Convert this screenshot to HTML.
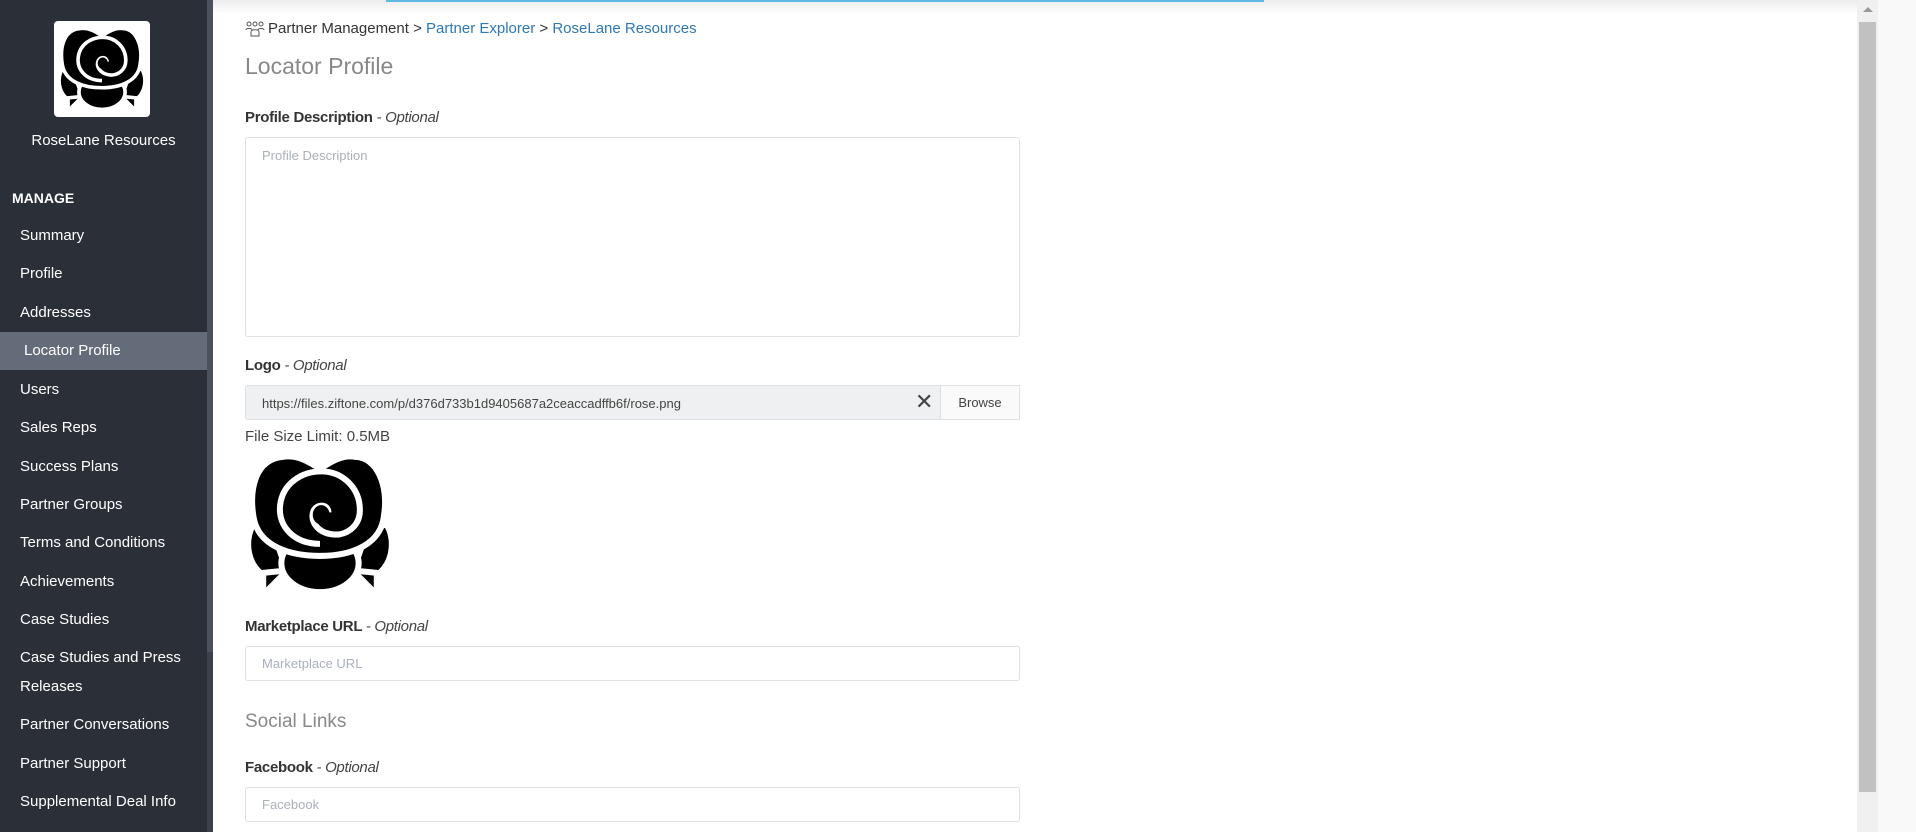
<!DOCTYPE html>
<html><head><meta charset="utf-8"><style>
*{box-sizing:border-box;margin:0;padding:0}
body{width:1916px;height:832px;overflow:hidden;background:#fff;font-family:"Liberation Sans",sans-serif;position:relative;color:#333}
.abs{position:absolute;white-space:nowrap}
#sb{position:absolute;left:0;top:0;width:207px;height:832px;background:#2b2f38}
#sbs{position:absolute;left:207px;top:0;width:6px;height:832px;background:#3b4049}
#sbt{position:absolute;left:207px;top:0;width:6px;height:652px;background:#4b515b}
.nav{position:absolute;left:20px;color:#fff;font-size:15px;line-height:20px}
.lab{position:absolute;left:245px;font-size:15px;line-height:20px;color:#333;font-weight:bold;letter-spacing:-0.3px}
.lab i{font-weight:normal;color:#444}
.inp{position:absolute;left:245px;width:775px;border:1px solid #dde1e5;border-radius:3px;background:#fff;color:#aab0ba;font-size:13px;padding-left:16px}
</style></head><body>
<svg width="0" height="0" style="position:absolute"><defs>
<g id="rose">
<g fill="#000" stroke="#fff" stroke-width="5">
<path d="M6 60 C-2 72 0 96 18 104 L40 104 C30 92 26 80 24 64 Z"/>
<path d="M116 60 C124 72 122 96 104 104 L82 104 C92 92 96 80 98 64 Z"/>
<path d="M14 118 L14 100 L34 98 Z"/><path d="M108 118 L108 100 L88 98 Z"/>
<ellipse cx="61" cy="92" rx="32" ry="24"/>
<path d="M30 4 C8 6 2 30 6 54 C10 78 36 86 61 86 C88 86 112 76 114 52 C118 28 108 4 90 4 C80 2 70 8 61 14 C52 8 42 2 30 4 Z"/>
</g>
<path d="M61 76 C40 76 26 62 28 44 C30 26 46 16 62 16 C80 16 94 30 94 48 C94 62 82 70 70 68 C58 66 52 56 56 48 C60 42 68 44 68 50" fill="none" stroke="#fff" stroke-width="5"/>
<ellipse cx="62" cy="52" rx="7" ry="8" fill="#000"/>
</g></defs></svg>
<div id="sb"></div><div id="sbs"></div><div id="sbt"></div>
<div class="abs" style="left:54px;top:21px;width:96px;height:96px;background:#fff;border-radius:4px"></div>
<svg class="abs" style="left:58px;top:25px" width="88" height="88" viewBox="0 0 122 120"><use href="#rose"/></svg>
<div class="abs" style="left:0;width:207px;top:132px;text-align:center;color:#fff;font-size:15px">RoseLane Resources</div>
<div class="abs" style="left:12px;top:190px;color:#fff;font-size:14px;font-weight:bold">MANAGE</div>
<div class="abs" style="left:0;top:332px;width:207px;height:38px;background:#646c7a"></div>
<div class="nav" style="top:226px">Summary</div>
<div class="nav" style="top:264px">Profile</div>
<div class="nav" style="top:303px">Addresses</div>
<div class="nav" style="top:341px;left:24px">Locator Profile</div>
<div class="nav" style="top:380px">Users</div>
<div class="nav" style="top:418px">Sales Reps</div>
<div class="nav" style="top:457px">Success Plans</div>
<div class="nav" style="top:495px">Partner Groups</div>
<div class="nav" style="top:533px">Terms and Conditions</div>
<div class="nav" style="top:572px">Achievements</div>
<div class="nav" style="top:610px">Case Studies</div>
<div class="nav" style="top:648px">Case Studies and Press</div>
<div class="nav" style="top:677px">Releases</div>
<div class="nav" style="top:715px">Partner Conversations</div>
<div class="nav" style="top:754px">Partner Support</div>
<div class="nav" style="top:792px">Supplemental Deal Info</div>

<div class="abs" style="left:213px;top:0;width:1644px;height:14px;background:linear-gradient(#ececec,#fff)"></div>
<div class="abs" style="left:386px;top:0;width:878px;height:2px;background:#5fb8e6"></div>
<svg class="abs" style="left:245px;top:21px" width="20" height="16" viewBox="0 0 20 16" fill="none" stroke="#555" stroke-width="1"><circle cx="4" cy="3" r="2"/><circle cx="10" cy="3" r="2"/><circle cx="16" cy="3" r="2"/><path d="M1 9c0-2 6-2 6 0M13 9c0-2 6-2 6 0M6 15v-4c0-3 8-3 8 0v4z"/></svg>
<div class="abs" style="left:268px;top:20px;font-size:15px;color:#333">Partner Management &gt; <span style="color:#2e79b5">Partner Explorer</span> &gt; <span style="color:#2e79b5">RoseLane Resources</span></div>
<div class="abs" style="left:245px;top:53px;font-size:23px;color:#888;font-weight:300">Locator Profile</div>
<div class="lab" style="top:108px">Profile Description <i>- Optional</i></div>
<div class="inp" style="top:137px;height:200px;padding-top:10px">Profile Description</div>
<div class="lab" style="top:356px">Logo <i>- Optional</i></div>
<div class="abs" style="left:245px;top:385px;width:775px;height:35px;border:1px solid #dde1e5;border-radius:3px;background:#eef0f1;font-size:13px;color:#444;padding:10px 16px">https://files.ziftone.com/p/d376d733b1d9405687a2ceaccadffb6f/rose.png</div>
<div class="abs" style="left:915px;top:390px;font-size:22px;color:#444;line-height:24px">✕</div>
<div class="abs" style="left:940px;top:385px;width:80px;height:35px;border:1px solid #dde1e5;background:#fafafa;font-size:13px;color:#444;text-align:center;line-height:33px">Browse</div>
<div class="abs" style="left:245px;top:428px;font-size:15px;color:#444">File Size Limit: 0.5MB</div>
<svg class="abs" style="left:245px;top:452px" width="150" height="145" viewBox="0 0 122 120"><use href="#rose"/></svg>
<div class="lab" style="top:617px">Marketplace URL <i>- Optional</i></div>
<div class="inp" style="top:646px;height:35px;line-height:33px">Marketplace URL</div>
<div class="abs" style="left:245px;top:711px;font-size:19px;color:#888;font-weight:300">Social Links</div>
<div class="lab" style="top:758px">Facebook <i>- Optional</i></div>
<div class="inp" style="top:787px;height:35px;line-height:33px">Facebook</div>

<div class="abs" style="left:1857px;top:0;width:21px;height:832px;background:#f0f0f0"></div>
<div class="abs" style="left:1859px;top:22px;width:17px;height:770px;background:#c1c1c1"></div>
<div class="abs" style="left:1863px;top:7px;width:0;height:0;border-left:5px solid transparent;border-right:5px solid transparent;border-bottom:5px solid #999"></div>
<div class="abs" style="left:1878px;top:0;width:38px;height:832px;background:#f9f9f9"></div>
</body></html>
